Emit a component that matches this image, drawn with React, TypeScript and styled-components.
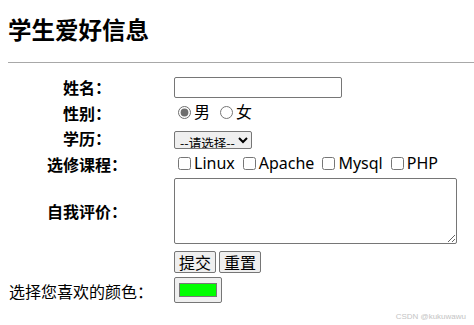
import styled, { createGlobalStyle } from "styled-components";

const GlobalStyle = createGlobalStyle`
    html, body {
        margin: 0;
        padding: 0;
        background: #fff;
    }
    body {
        font-family: "Noto Sans", "Noto Sans CJK SC", sans-serif;
        font-size: 16px;
        color: #000;
    }
`;

const Page = styled.div`
    padding: 0 0 0 8px;
    overflow: hidden;
`;

const Title = styled.h2`
    margin: 7px 0 0;
    height: 44px;
    line-height: 44px;
    font-size: 23.5px;
    font-weight: bold;
    font-family: "Noto Sans CJK SC", sans-serif;
`;

const Divider = styled.hr`
    margin: 11px 0 0 0;
    border: none;
    border-top: 1px solid #a8a8a8;
    height: 0;
`;

const FormTable = styled.table`
    margin-top: 10px;
    border-spacing: 2px;
    border-collapse: separate;
    margin-left: -2px;
`;

const Label = styled.th`
    width: 156px;
    padding: 1px;
    text-align: center;
    font-weight: bold;
    line-height: 21px;
    font-family: "Noto Sans CJK SC", sans-serif;
`;

const PlainLabel = styled.td`
    padding: 1px 0 1px 1px;
    white-space: nowrap;
    font-family: "Noto Sans CJK SC", sans-serif;
`;

const Cell = styled.td<{ $top?: number }>`
    padding: ${(p) => p.$top ?? 1}px 1px 1px 6px;
    line-height: 21px;
    white-space: nowrap;
`;

const TextInput = styled.input`
    box-sizing: border-box;
    width: 168px;
    height: 21px;
    border: 1px solid #767676;
    border-radius: 2px;
    vertical-align: middle;
`;

const Choice = styled.label<{ $gap?: number }>`
    display: inline-flex;
    align-items: center;
    margin-right: ${(p) => p.$gap ?? 8}px;
    font-family: "Noto Sans", "Noto Sans CJK SC", sans-serif;
    input {
        margin: 0 3px 0 4px;
        width: 13px;
        height: 13px;
        accent-color: #6e6e6e;
    }
`;

const Select = styled.select`
    box-sizing: border-box;
    height: 18px;
    font-size: 12.5px;
    line-height: 14px;
    font-family: "Noto Sans CJK SC", sans-serif;
    padding: 0 0 0 1px;
    border: 1px solid #767676;
    border-radius: 2px;
    vertical-align: middle;
`;

const Comment = styled.textarea`
    box-sizing: border-box;
    width: 283px;
    height: 66px;
    border: 1px solid #767676;
    border-radius: 2px;
    vertical-align: middle;
`;

const Button = styled.button`
    height: 22px;
    padding: 0 4px;
    margin-right: 3px;
    font-size: 16px;
    font-family: "Noto Sans CJK SC", sans-serif;
    background: #efefef;
    border: 1px solid #767676;
    border-radius: 2px;
    line-height: 18px;
`;

const ColorInput = styled.input`
    width: 48px;
    height: 26px;
    padding: 1px 2px;
    border: 1px solid #767676;
    border-radius: 2px;
    background: #efefef;
    vertical-align: middle;
`;

const Watermark = styled.div`
    text-align: right;
    padding-right: 8px;
    margin-top: 6px;
    font-size: 8px;
    color: #c4c4c4;
    font-family: "Liberation Sans", sans-serif;
`;

const courses = ["Linux", "Apache", "Mysql", "PHP"];

export default function App() {
    return (
        <>
            <GlobalStyle />
            <Page>
                <Title>学生爱好信息</Title>
                <Divider />
                <FormTable>
                    <tbody>
                        <tr>
                            <Label>姓名：</Label>
                            <Cell>
                                <TextInput type="text" />
                            </Cell>
                        </tr>
                        <tr>
                            <Label>性别：</Label>
                            <Cell>
                                <Choice $gap={6}>
                                    <input type="radio" name="sex" defaultChecked />男
                                </Choice>
                                <Choice>
                                    <input type="radio" name="sex" />女
                                </Choice>
                            </Cell>
                        </tr>
                        <tr>
                            <Label>学历：</Label>
                            <Cell>
                                <Select defaultValue="">
                                    <option value="">--请选择--</option>
                                    <option value="1">本科</option>
                                    <option value="2">硕士</option>
                                </Select>
                            </Cell>
                        </tr>
                        <tr>
                            <Label>选修课程：</Label>
                            <Cell>
                                {courses.map((c) => (
                                    <Choice key={c} $gap={4}>
                                        <input type="checkbox" />
                                        {c}
                                    </Choice>
                                ))}
                            </Cell>
                        </tr>
                        <tr>
                            <Label>自我评价：</Label>
                            <Cell $top={0}>
                                <Comment />
                            </Cell>
                        </tr>
                        <tr>
                            <Label />
                            <Cell $top={4}>
                                <Button type="submit">提交</Button>
                                <Button type="reset">重置</Button>
                            </Cell>
                        </tr>
                        <tr>
                            <PlainLabel>选择您喜欢的颜色：</PlainLabel>
                            <Cell $top={0}>
                                <ColorInput type="color" defaultValue="#00ff00" />
                            </Cell>
                        </tr>
                    </tbody>
                </FormTable>
                <Watermark>CSDN @kukuwawu</Watermark>
            </Page>
        </>
    );
}
